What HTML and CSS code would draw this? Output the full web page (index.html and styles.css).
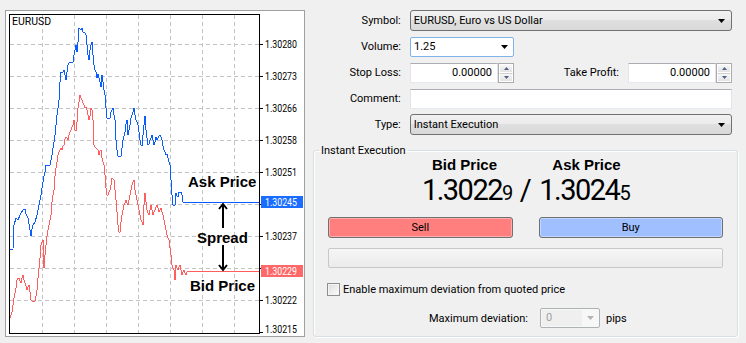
FILE: index.html
```html
<!DOCTYPE html>
<html lang="en">
  <head>
    <meta charset="UTF-8" />
    <meta name="viewport" content="width=device-width, initial-scale=1.0" />
    <title>New Order</title>
    <link rel="stylesheet" href="styles.css">
  </head>
  <body>
    <div class="chart">
      <svg class="chart-svg" width="300" height="327" viewBox="5 10 300 327">
        <rect class="frame" x="5.5" y="10.5" width="299" height="326" />
        <path class="grid" d="M10 44.5H259M10 76.5H259M10 108.5H259M10 140.5H259M10 172.5H259M10 204.5H259M10 236.5H259M10 268.5H259M10 300.5H259M42.5 15V333M74.5 15V333M106.5 15V333M138.5 15V333M170.5 15V333M202.5 15V333M234.5 15V333" />

        <!-- ask (blue) and bid (red) ticks -->
        <polyline class="ask" points="10,249 13,249 14,225 16,218 18,220 20,215 23,210 25,209 26,214 28,218 29,224 30,230 31,236 32,229 33,225 35,222 37,215 38,210 40,200 41,195 42,188 43,182 44,176 45,172 46,165 50,165 51,160 52,155 53,148 54,142 55,135 56,125 57,115 58,108 59,100 60,82 61,72 63,72 64,70 65,75 66,80 67,72 68,65 69,63 71,62 73,62 74,55 75,50 76,45 77,52 78,42 79,28 81,30 82,28 83,32 85,33 86,35 87,45 88,55 89,60 90,50 91,45 92,42 93,55 94,65 95,70 96,72 97,78 98,74 99,78 100,82 101,87 102,75 103,82 104,90 105,95 106,108 107,118 110,118 111,112 113,108 114,115 115,120 116,140 117,150 118,156 121,156 122,148 123,140 124,136 125,132 126,124 127,120 128,135 129,130 130,125 131,118 132,115 133,112 134,108 135,115 136,120 137,122 138,125 139,132 140,140 141,145 142,146 143,135 144,125 145,116 146,130 147,138 148,145 149,144 150,140 151,138 152,135 153,140 154,145 155,142 156,137 157,140 158,138 159,136 160,135 161,137 162,140 163,146 164,150 165,152 166,155 167,154 168,158 169,162 170,165 171,180 172,195 173,205 175,205 176,193 177,196 178,197 179,192 181,192 182,195 183,202 260,202" />
        <polyline class="bid" points="10,318 11,315 12,312 13,305 14,298 15,293 16,288 17,280 18,278 19,278 20,281 21,283 22,278 23,275 24,280 25,283 26,286 27,290 28,287 29,285 30,292 31,300 32,301 35,301 36,296 37,290 38,278 39,268 40,258 41,245 42,242 43,240 44,268 45,255 46,245 47,236 48,230 49,225 50,220 51,215 52,202 53,195 54,190 55,176 56,168 57,162 58,155 59,152 60,150 61,148 62,150 63,146 64,145 65,139 66,137 67,138 68,140 69,135 70,132 71,130 72,127 73,125 74,120 75,130 76,131 77,122 78,108 79,102 80,95 81,98 82,100 83,103 84,105 85,108 86,107 87,110 88,115 89,120 90,116 91,108 92,110 93,120 94,145 95,147 96,148 97,149 98,150 99,155 100,151 101,150 102,158 103,162 104,165 105,175 106,188 107,195 108,195 109,192 110,190 111,185 112,178 113,179 114,180 115,190 116,200 117,212 118,225 119,232 120,232 121,222 122,215 123,210 124,205 125,203 126,200 127,203 128,205 129,200 130,195 131,190 132,185 133,182 134,180 135,190 136,195 137,200 138,205 139,210 140,215 141,220 142,222 143,225 144,205 145,193 146,202 147,210 148,213 149,215 150,210 151,205 152,210 153,215 154,212 155,210 156,207 157,205 158,208 159,212 160,210 161,208 162,212 163,215 164,220 165,225 166,230 167,235 168,238 169,240 170,248 171,255 172,265 173,268 174,270 175,280 176,265 177,268 178,270 179,267 180,265 181,270 182,275 183,272 184,270 185,273 186,275 187,272 188,271 260,271" />

        <rect class="plot" x="9.5" y="14.5" width="250" height="319" />
        <path class="ticks" d="M260 44.5h3M260 76.5h3M260 108.5h3M260 140.5h3M260 172.5h3M260 204.5h3M260 236.5h3M260 268.5h3M260 300.5h3M260 332.5h3" />

        <g class="axis">
          <text x="265" y="48" textLength="32" lengthAdjust="spacingAndGlyphs">1.30280</text>
          <text x="265" y="80" textLength="32" lengthAdjust="spacingAndGlyphs">1.30273</text>
          <text x="265" y="112" textLength="32" lengthAdjust="spacingAndGlyphs">1.30266</text>
          <text x="265" y="144" textLength="32" lengthAdjust="spacingAndGlyphs">1.30258</text>
          <text x="265" y="176" textLength="32" lengthAdjust="spacingAndGlyphs">1.30251</text>
          <text x="265" y="240" textLength="32" lengthAdjust="spacingAndGlyphs">1.30237</text>
          <text x="265" y="304" textLength="32" lengthAdjust="spacingAndGlyphs">1.30222</text>
          <text x="265" y="333" textLength="32" lengthAdjust="spacingAndGlyphs">1.30215</text>
        </g>

        <rect class="tag-ask" x="261" y="196" width="42" height="12" />
        <text class="tag-text" x="265" y="206" textLength="32" lengthAdjust="spacingAndGlyphs">1.30245</text>
        <rect class="tag-bid" x="261" y="265" width="42" height="12" />
        <text class="tag-text" x="265" y="275" textLength="32" lengthAdjust="spacingAndGlyphs">1.30229</text>

        <text class="symbol" x="12" y="25">EURUSD</text>

        <text class="note" x="188" y="187">Ask Price</text>
        <text class="note" x="197" y="243">Spread</text>
        <text class="note" x="190" y="291">Bid Price</text>
        <path class="arrow-line" d="M223 204V228M219 209L223 204L227 209M223 245V270M219 265L223 270L227 265" />
      </svg>
    </div>

    <div class="order">
      <div class="row">
        <span class="caption">Symbol:</span>
        <div class="combo combo-wide">
          <span>EURUSD, Euro vs US Dollar</span>
          <svg class="drop" width="7" height="4" viewBox="0 0 7 4"><path d="M0 0h7L3.5 4z" /></svg>
        </div>
      </div>

      <div class="row">
        <span class="caption">Volume:</span>
        <div class="edit-combo">
          <span>1.25</span>
          <svg class="drop" width="7" height="4" viewBox="0 0 7 4"><path d="M0 0h7L3.5 4z" /></svg>
        </div>
      </div>

      <div class="row">
        <span class="caption">Stop Loss:</span>
        <div class="spin-field">
          <input class="number" type="text" value="0.00000" />
          <div class="spin">
            <span><svg width="5" height="3" viewBox="0 0 5 3"><path d="M2.5 0L5 3H0z" /></svg></span>
            <span><svg width="5" height="3" viewBox="0 0 5 3"><path d="M0 0h5L2.5 3z" /></svg></span>
          </div>
        </div>
        <span class="caption caption-fill">Take Profit:</span>
        <div class="spin-field">
          <input class="number" type="text" value="0.00000" />
          <div class="spin">
            <span><svg width="5" height="3" viewBox="0 0 5 3"><path d="M2.5 0L5 3H0z" /></svg></span>
            <span><svg width="5" height="3" viewBox="0 0 5 3"><path d="M0 0h5L2.5 3z" /></svg></span>
          </div>
        </div>
      </div>

      <div class="row">
        <span class="caption">Comment:</span>
        <input class="text-field" type="text" value="" />
      </div>

      <div class="row">
        <span class="caption">Type:</span>
        <div class="combo combo-wide">
          <span>Instant Execution</span>
          <svg class="drop" width="7" height="4" viewBox="0 0 7 4"><path d="M0 0h7L3.5 4z" /></svg>
        </div>
      </div>

      <fieldset class="group">
        <legend>Instant Execution</legend>

        <div class="group-body">
          <div class="quote-heads">
            <span>Bid Price</span>
            <span>Ask Price</span>
          </div>

          <div class="quote">1.3022<span class="pip">9</span><span class="sep">/</span>1.3024<span class="pip">5</span></div>

          <div class="actions">
            <button class="btn btn-sell" type="button">Sell</button>
            <button class="btn btn-buy" type="button">Buy</button>
          </div>

          <div class="status"></div>

          <label class="check-row">
            <span class="checkbox"></span>
            Enable maximum deviation from quoted price
          </label>

          <div class="deviation-row">
            <span class="deviation-label">Maximum deviation:</span>
            <div class="combo-disabled">
              <span class="combo-value">0</span>
              <svg class="drop" width="7" height="4" viewBox="0 0 7 4"><path d="M0 0h7L3.5 4z" /></svg>
            </div>
            <span>pips</span>
          </div>
        </div>
      </fieldset>
    </div>
  </body>
</html>
```

FILE: styles.css
```css
/* General Reset */
* {
  box-sizing: border-box;
}

body {
  margin: 0;
  height: 343px;
  overflow: hidden;
  display: flex;
  align-items: flex-start;
  background-color: #f0f0f0;
  color: #000;
  font-family: Roboto, 'Liberation Sans', sans-serif;
  font-size: 11px;
}

/* Chart */
.chart {
  margin: 10px 0 0 5px;
  width: 300px;
  height: 327px;
}

.chart-svg {
  display: block;
}

.frame {
  fill: #fff;
  stroke: #a0a0a0;
}

.grid {
  fill: none;
  stroke: #c4c4c4;
  stroke-dasharray: 4 3;
}

.ask,
.bid {
  fill: none;
  stroke-width: 1;
  shape-rendering: crispEdges;
}

.ask {
  stroke: #0a5cff;
}

.bid {
  stroke: #ff5e5e;
}

.plot {
  fill: none;
  stroke: #000;
}

.ticks {
  stroke: #000;
}

.axis text,
.tag-text {
  font-family: Roboto, 'Liberation Sans', sans-serif;
  font-size: 11px;
  fill: #000;
}

.tag-ask {
  fill: #1a6dff;
}

.tag-bid {
  fill: #ff6868;
}

.tag-text {
  fill: #fff;
}

.symbol {
  font-family: Roboto, 'Liberation Sans', sans-serif;
  font-size: 10.5px;
}

.note {
  font-family: 'Liberation Sans', Arial, sans-serif;
  font-size: 15px;
  font-weight: bold;
}

.arrow-line {
  fill: none;
  stroke: #000;
  stroke-width: 2;
}

/* Order form */
.order {
  margin-left: 8px;
  width: 425px;
  padding-top: 10px;
}

.row {
  display: flex;
  align-items: center;
  height: 21px;
  margin-bottom: 5px;
  padding-right: 6px;
}

.caption {
  width: 88px;
  margin-right: 9px;
  text-align: right;
  white-space: nowrap;
}

.caption-fill {
  flex: 1;
  width: auto;
}

.combo {
  display: flex;
  align-items: center;
  justify-content: space-between;
  height: 21px;
  padding: 0 6px 0 3px;
  border: 1px solid #707070;
  border-radius: 3px;
  background: linear-gradient(#f2f2f2, #ebebeb 50%, #dfdfdf 50%, #d9d9d9);
}

.combo-wide {
  width: 323px;
}

.edit-combo {
  display: flex;
  align-items: center;
  justify-content: space-between;
  width: 104px;
  height: 20px;
  padding: 0 5px 0 3px;
  border: 1px solid #7eb4ea;
  border-radius: 2px;
  background-color: #fff;
}

.drop {
  display: block;
  fill: #000;
}

.spin-field {
  display: flex;
  width: 104px;
  height: 20px;
}

.number,
.text-field {
  margin: 0;
  padding: 0 5px 0 3px;
  border: 1px solid;
  border-color: #abadb3 #e2e3ea #e3e9ef #e2e3ea;
  background-color: #fff;
  font-family: inherit;
  font-size: 11px;
  color: #000;
  outline: none;
}

.number {
  flex: 1;
  min-width: 0;
  height: 20px;
  text-align: right;
}

.text-field {
  width: 323px;
  height: 20px;
}

.spin {
  display: flex;
  flex-direction: column;
  width: 16px;
  height: 20px;
  border: 1px solid #acacac;
  background-color: #f4f4f4;
}

.spin span {
  flex: 1;
  display: flex;
  align-items: center;
  justify-content: center;
  background: linear-gradient(#f7f7f7, #e2e2e2);
  border: 1px solid #fff;
}

.spin span + span {
  border-top-color: #d0d0d0;
}

.spin svg {
  display: block;
  fill: #4d6185;
}

/* Instant Execution group */
.group {
  margin: 9px 0 0;
  padding: 0 0 8px;
  min-width: 0;
  border: 1px solid #d5dfe5;
  border-radius: 3px;
  box-shadow: inset 1px 1px 0 #fff, 1px 1px 0 #fff;
}

.group legend {
  margin-left: 5px;
  padding: 0 2px;
  line-height: 13px;
}

.group-body {
  padding: 0 14px;
}

.quote-heads {
  display: flex;
  justify-content: center;
  gap: 22px;
  margin-top: -1px;
  font-family: 'Liberation Sans', Arial, sans-serif;
  font-size: 15px;
  font-weight: bold;
  line-height: 17px;
}

.quote-heads span {
  width: 100px;
  text-align: center;
}

.quote {
  height: 34px;
  font-size: 29px;
  line-height: 34px;
  letter-spacing: -1.5px;
  text-align: center;
  white-space: nowrap;
}

.pip {
  font-size: 20px;
  line-height: 20px;
}

.sep {
  margin: 0 9px 0 8px;
}

.actions {
  display: flex;
  gap: 26px;
  margin-top: 10px;
}

.btn {
  flex: 1;
  height: 21px;
  padding: 0;
  border: 1px solid #707070;
  border-radius: 3px;
  box-shadow: inset 0 0 0 1px rgba(255, 255, 255, 0.35);
  font-family: inherit;
  font-size: 11px;
  color: #000;
}

.btn-sell {
  background-color: #ff7f7f;
}

.btn-buy {
  background-color: #9fbfff;
}

.status {
  height: 20px;
  margin-top: 10px;
  border: 1px solid #c8c8c8;
  border-radius: 2px;
  background: linear-gradient(#f6f6f6, #ebebeb);
}

.check-row {
  display: flex;
  align-items: center;
  gap: 3px;
  height: 13px;
  margin-top: 15px;
  margin-left: -1px;
}

.checkbox {
  width: 13px;
  height: 13px;
  border: 1px solid #8e8f8f;
  background: linear-gradient(135deg, #dcdcdc, #fdfdfd);
  box-shadow: inset 0 0 0 1px #f4f4f4;
}

.deviation-row {
  display: flex;
  align-items: center;
  height: 20px;
  margin-top: 12px;
}

.deviation-label {
  width: 200px;
  margin-right: 12px;
  text-align: right;
}

.combo-disabled {
  display: flex;
  align-items: center;
  justify-content: space-between;
  width: 60px;
  height: 20px;
  margin-right: 6px;
  padding: 1px 5px 1px 1px;
  border: 1px solid #adb2b5;
  border-radius: 2px;
  background-color: #f7f7f7;
}

.combo-value {
  width: 40px;
  height: 100%;
  padding-left: 4px;
  line-height: 16px;
  color: #a0a0a0;
  background-color: #efefef;
}

.combo-disabled .drop {
  fill: #b4b4b4;
}
```
